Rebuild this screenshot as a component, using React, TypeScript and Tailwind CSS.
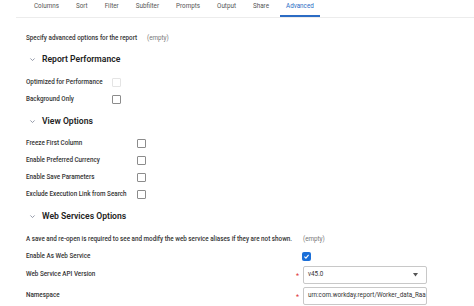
import React from 'react';

const tabs = ['Columns', 'Sort', 'Filter', 'Subfilter', 'Prompts', 'Output', 'Share', 'Advanced'];

const Chevron: React.FC = () => (
  <svg width="7" height="7" viewBox="0 0 10 10" className="mr-[6px]">
    <path d="M2 3.5 L5 6.5 L8 3.5" fill="none" stroke="#8a8fa0" strokeWidth="1.3" />
  </svg>
);

const Box: React.FC<{ checked?: boolean; disabled?: boolean }> = ({ checked, disabled }) =>
  checked ? (
    <div className="w-[9px] h-[9px] rounded-[2px] bg-[#1b6fd8] flex items-center justify-center">
      <svg width="7" height="7" viewBox="0 0 10 10">
        <path d="M2 5.2 L4.2 7.3 L8 2.8" fill="none" stroke="white" strokeWidth="1.6" />
      </svg>
    </div>
  ) : (
    <div
      className={`w-[9px] h-[9px] rounded-[1px] border ${disabled ? 'border-[#e4e4e4]' : 'border-[#8c8c8c]'}`}
    />
  );

const Section: React.FC<{ title: string; top: string }> = ({ title, top }) => (
  <div className={`flex items-center h-[17px] pl-[3px] ${top}`}>
    <Chevron />
    <span className="text-[8.6px] font-semibold text-[#222]">{title}</span>
  </div>
);

const Row: React.FC<{ label: string; w: string; children?: React.ReactNode }> = ({ label, w, children }) => (
  <div className="flex items-center h-[17px]">
    <span className={`${w} shrink-0 text-[6.3px] font-medium text-[#333] whitespace-nowrap`}>{label}</span>
    {children}
  </div>
);

const App: React.FC = () => {
  return (
    <div className="w-[474px] h-[306px] bg-white overflow-hidden" style={{ fontFamily: 'Roboto, "Noto Sans", sans-serif' }}>
      <div className="ml-[16px] flex items-end h-[18px] border-b border-[#ececec] pl-[12px]">
        {tabs.map((t) => (
          <div
            key={t}
            className={`h-[17px] flex items-center px-[6px] mr-[5px] text-[6.3px] ${
              t === 'Advanced' ? 'text-[#2b6cc4] border-b-2 border-[#2b6cc4] pt-[2px]' : 'text-[#555]'
            }`}
          >
            <span className="-mt-[4px]">{t}</span>
          </div>
        ))}
      </div>

      <div className="pl-[26px] pt-[12px]">
        <div className="flex items-center h-[17px] text-[6.3px]">
          <span className="w-[121px] font-medium text-[#333]">Specify advanced options for the report</span>
          <span className="text-[#777]">(empty)</span>
        </div>

        <Section title="Report Performance" top="mt-[4px]" />
        <div className="mt-[6px]">
          <Row label="Optimized for Performance" w="w-[86px]">
            <Box disabled />
          </Row>
          <Row label="Background Only" w="w-[86px]">
            <Box />
          </Row>
        </div>

        <Section title="View Options" top="mt-[5px]" />
        <div className="mt-[5px]">
          <Row label="Freeze First Column" w="w-[111px]">
            <Box />
          </Row>
          <Row label="Enable Preferred Currency" w="w-[111px]">
            <Box />
          </Row>
          <Row label="Enable Save Parameters" w="w-[111px]">
            <Box />
          </Row>
          <Row label="Exclude Execution Link from Search" w="w-[111px]">
            <Box />
          </Row>
        </div>

        <Section title="Web Services Options" top="mt-[5px]" />
        <div className="mt-[6px]">
          <Row label="A save and re-open is required to see and modify the web service aliases if they are not shown." w="w-[277px]">
            <span className="text-[6.3px] text-[#777]">(empty)</span>
          </Row>
          <Row label="Enable As Web Service" w="w-[276px]">
            <Box checked />
          </Row>
          <div className="flex items-center h-[22px] mt-[-1px]">
            <span className="w-[270px] shrink-0 text-[6.3px] font-medium text-[#333]">Web Service API Version</span>
            <span className="w-[7px] text-[7px] text-[#d33] mt-[2px]">*</span>
            <div className="w-[124px] h-[18px] border border-[#c8c8c8] rounded-[2px] flex items-center justify-between pl-[4px] pr-[8px]">
              <span className="text-[6.3px] text-[#333]">v45.0</span>
              <svg width="5" height="4" viewBox="0 0 10 8">
                <path d="M0 0 L10 0 L5 7 Z" fill="#555" />
              </svg>
            </div>
          </div>
          <div className="flex items-center h-[22px] mt-[-1px]">
            <span className="w-[270px] shrink-0 text-[6.3px] font-medium text-[#333]">Namespace</span>
            <span className="w-[7px] text-[7px] text-[#d33] mt-[2px]">*</span>
            <div className="w-[124px] h-[18px] border border-[#c8c8c8] rounded-[2px] flex items-center pl-[4px] overflow-hidden whitespace-nowrap">
              <span className="text-[6.3px] text-[#333]">urn:com.workday.report/Worker_data_Raa</span>
            </div>
          </div>
        </div>
      </div>
    </div>
  );
};

export default App;
